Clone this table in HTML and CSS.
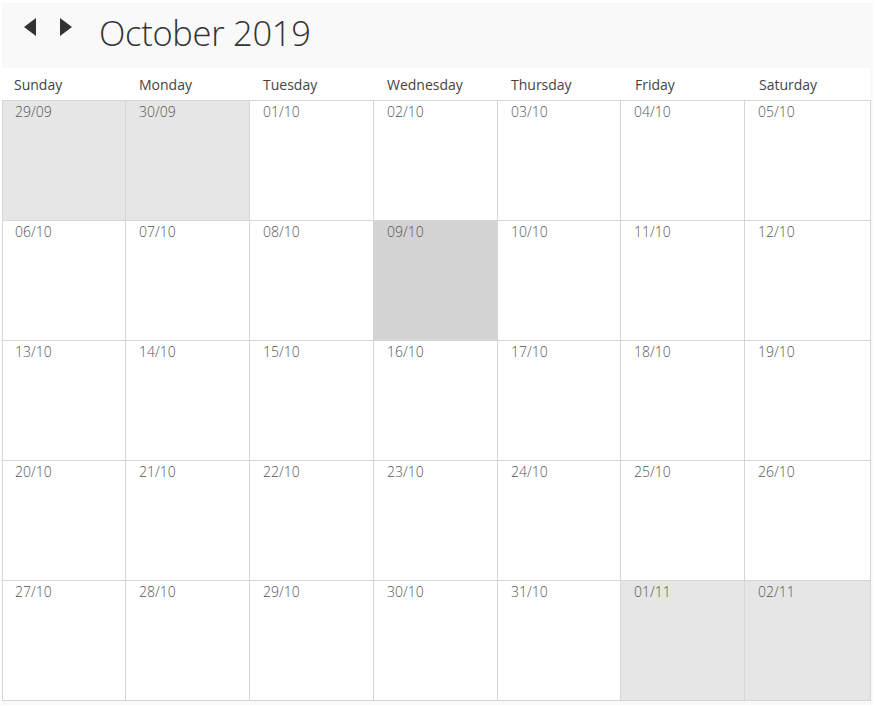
FILE: index.html
```html
<!DOCTYPE html>
<html>
<head>
<meta charset="utf-8">
<link rel="stylesheet" href="styles.css">
</head>
<body>
<div class="cal">
  <div class="toolbar">
    <button class="nav" aria-label="Previous"><svg width="12" height="18" viewBox="0 0 12 18"><polygon points="12,0 12,18 0,9" fill="#333"/></svg></button>
    <button class="nav" aria-label="Next"><svg width="12" height="18" viewBox="0 0 12 18"><polygon points="0,0 0,18 12,9" fill="#333"/></svg></button>
    <h1 class="title">October 2019</h1>
  </div>
  <div class="weekdays">
    <div class="wd">Sunday</div><div class="wd">Monday</div><div class="wd">Tuesday</div><div class="wd">Wednesday</div><div class="wd">Thursday</div><div class="wd">Friday</div><div class="wd">Saturday</div>
  </div>
  <div class="grid">
    <div class="day other">29/09</div><div class="day other">30/09</div><div class="day">01/10</div><div class="day">02/10</div><div class="day">03/10</div><div class="day">04/10</div><div class="day">05/10</div>
    <div class="day">06/10</div><div class="day">07/10</div><div class="day">08/10</div><div class="day selected">09/10</div><div class="day">10/10</div><div class="day">11/10</div><div class="day">12/10</div>
    <div class="day">13/10</div><div class="day">14/10</div><div class="day">15/10</div><div class="day">16/10</div><div class="day">17/10</div><div class="day">18/10</div><div class="day">19/10</div>
    <div class="day">20/10</div><div class="day">21/10</div><div class="day">22/10</div><div class="day">23/10</div><div class="day">24/10</div><div class="day">25/10</div><div class="day">26/10</div>
    <div class="day">27/10</div><div class="day">28/10</div><div class="day">29/10</div><div class="day">30/10</div><div class="day">31/10</div><div class="day other">01/11</div><div class="day other">02/11</div>
  </div>
</div>
</body>
</html>
```
FILE: styles.css
```css
html, body {
  margin: 0;
  padding: 0;
  background: #ffffff;
}
body {
  padding: 3px 0 0 2px;
  font-family: "Open Sans", "Segoe UI", sans-serif;
}
.cal {
  width: 871px;
  height: 702px;
  background: #f9f9f9;
  display: flex;
  flex-direction: column;
}
.toolbar {
  height: 65px;
  display: flex;
  align-items: center;
  box-sizing: border-box;
  padding-left: 19px;
  padding-bottom: 18px;
}
.nav {
  border: 0;
  background: transparent;
  padding: 0;
  width: 18px;
  height: 24px;
  margin-right: 18px;
  display: flex;
  align-items: center;
  justify-content: center;
  cursor: pointer;
}
.nav svg { display: block; }
.title {
  margin: 0 0 0 6px;
  font-weight: 300;
  font-size: 34.5px;
  color: #333;
  letter-spacing: -0.3px;
  line-height: 1;
  position: relative;
  top: 7px;
}
.weekdays {
  width: 868px;
  height: 32px;
  background: #fff;
  display: grid;
  grid-template-columns: 125px 124px 124px 124px 124px 124px 123px;
}
.wd {
  padding: 8px 0 0 12px;
  font-size: 14px;
  color: #444;
  line-height: 18px;
}
.grid {
  width: 868px;
  display: grid;
  grid-template-columns: 123px 124px 124px 124px 123px 124px 126px;
  grid-template-rows: repeat(5, 120px);
  border-left: 1px solid #d6d6d6;
  border-top: 1px solid #d6d6d6;
  background: #fff;
}
.day {
  border-right: 1px solid #d6d6d6;
  border-bottom: 1px solid #d6d6d6;
  padding: 2px 0 0 13px;
  font-size: 14px;
  font-weight: 300;
  color: #555;
  line-height: 18px;
}
.day:nth-child(7n+1) { padding-left: 12px; }
.day.other { background: #e6e6e6; }
.day.selected { background: #d3d3d3; }
```
